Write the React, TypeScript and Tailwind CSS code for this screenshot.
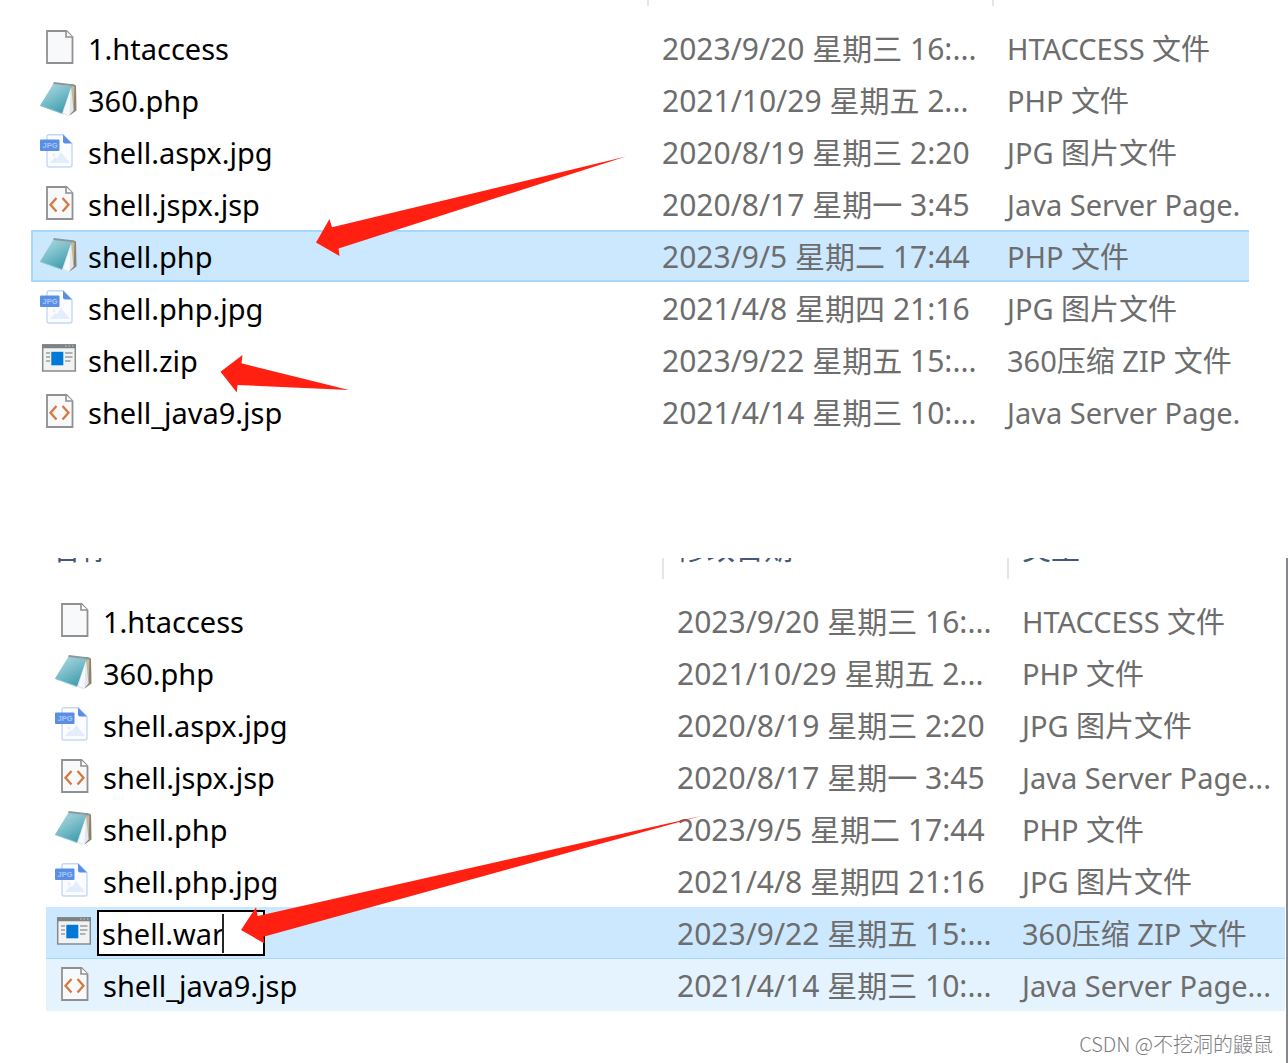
import { useState } from 'react'

type IconKind = 'blank' | 'notepad' | 'image' | 'code' | 'archive'
type RowState = 'normal' | 'selected' | 'renaming' | 'hover'

interface FileEntry {
  name: string
  icon: IconKind
  modified: string
  type: string
  state?: RowState
}

const UPLOAD_FILES: FileEntry[] = [
  { name: '1.htaccess', icon: 'blank', modified: '2023/9/20 星期三 16:...', type: 'HTACCESS 文件' },
  { name: '360.php', icon: 'notepad', modified: '2021/10/29 星期五 2...', type: 'PHP 文件' },
  { name: 'shell.aspx.jpg', icon: 'image', modified: '2020/8/19 星期三 2:20', type: 'JPG 图片文件' },
  { name: 'shell.jspx.jsp', icon: 'code', modified: '2020/8/17 星期一 3:45', type: 'Java Server Page.' },
  { name: 'shell.php', icon: 'notepad', modified: '2023/9/5 星期二 17:44', type: 'PHP 文件', state: 'selected' },
  { name: 'shell.php.jpg', icon: 'image', modified: '2021/4/8 星期四 21:16', type: 'JPG 图片文件' },
  { name: 'shell.zip', icon: 'archive', modified: '2023/9/22 星期五 15:...', type: '360压缩 ZIP 文件' },
  { name: 'shell_java9.jsp', icon: 'code', modified: '2021/4/14 星期三 10:...', type: 'Java Server Page.' },
]

const RENAME_FILES: FileEntry[] = [
  { name: '1.htaccess', icon: 'blank', modified: '2023/9/20 星期三 16:...', type: 'HTACCESS 文件' },
  { name: '360.php', icon: 'notepad', modified: '2021/10/29 星期五 2...', type: 'PHP 文件' },
  { name: 'shell.aspx.jpg', icon: 'image', modified: '2020/8/19 星期三 2:20', type: 'JPG 图片文件' },
  { name: 'shell.jspx.jsp', icon: 'code', modified: '2020/8/17 星期一 3:45', type: 'Java Server Page...' },
  { name: 'shell.php', icon: 'notepad', modified: '2023/9/5 星期二 17:44', type: 'PHP 文件' },
  { name: 'shell.php.jpg', icon: 'image', modified: '2021/4/8 星期四 21:16', type: 'JPG 图片文件' },
  { name: 'shell.war', icon: 'archive', modified: '2023/9/22 星期五 15:...', type: '360压缩 ZIP 文件', state: 'renaming' },
  { name: 'shell_java9.jsp', icon: 'code', modified: '2021/4/14 星期三 10:...', type: 'Java Server Page...', state: 'hover' },
]

const ROW_STYLES: Record<RowState, string> = {
  normal: '',
  selected: 'bg-[#cce8ff] shadow-[inset_2px_0_0_#a6d8ff,inset_0_2px_0_#a6d8ff,inset_0_-2px_0_#a6d8ff]',
  renaming: 'bg-[#cce8ff] shadow-[inset_0_-1px_0_#a9d7fd]',
  hover: 'bg-[#e5f3ff]',
}

function PageShape() {
  return (
    <>
      <path d="M7 1h19.5l6 6v26H7z" fill="#f8f9fa" stroke="#909090" strokeWidth={1.8} />
      <path d="M26 1v6h6.5" fill="#fff" stroke="#909090" strokeWidth={1.6} />
    </>
  )
}

function FileIcon({ kind }: { kind: IconKind }) {
  return (
    <svg className="h-9 w-9 shrink-0 overflow-visible" viewBox="0 0 36 36" fill="none" aria-hidden="true">
      {kind === 'blank' && <PageShape />}

      {kind === 'code' && (
        <>
          <PageShape />
          <path d="M16.5 12l-6 6.7 6 6.7M22.5 12l6 6.7-6 6.7" stroke="#d9773f" strokeWidth={2.3} />
        </>
      )}

      {kind === 'notepad' && (
        <>
          <defs>
            <linearGradient id="cover" x1="0" y1="0" x2="0.6" y2="1">
              <stop offset="0" stopColor="#b5dde3" />
              <stop offset="0.5" stopColor="#7fc0cc" />
              <stop offset="1" stopColor="#439eaf" />
            </linearGradient>
          </defs>
          <path d="M31 2l5 1.5.5 25-7 5z" fill="#8b8170" />
          <path d="M31.5 3l3 1.5-1 24-5 5z" fill="#c5b999" />
          <path d="M31 4l2.5 24.5-5 5.5-10-3z" fill="#dfe8ef" />
          <path d="M30.5 7l-1 26-6-2z" fill="#f6fafc" />
          <path d="M13.5 1.5l18 2.5-9.5 27.5L0 23.5z" fill="url(#cover)" />
          <path d="M13.5 1l21 2.5" stroke="#8b9899" strokeWidth={1.8} />
          <path d="M0 23.5l22 8" stroke="#82c6cf" strokeWidth={1} />
        </>
      )}

      {kind === 'image' && (
        <>
          <path d="M9 .7h14l9 9V31a2 2 0 01-2 2H9a2 2 0 01-2-2V2.7a2 2 0 012-2z" fill="#fbfcff" stroke="#c5d7f8" strokeWidth={1.4} />
          <path d="M23 .5v7a2 2 0 002 2h7z" fill="#5b8fe6" />
          <path d="M10 29l5-6 2 1 4-6 9 11z" fill="#e4edfc" />
          <circle cx="14" cy="21" r="1.5" fill="#e4edfc" />
          <rect x="0" y="5.5" width="19.5" height="11.5" rx="1" fill="#5b8fe6" />
          <text x="2.5" y="14" fontSize="7.5" fontWeight="700" fill="#a9c6f6" fontFamily="Liberation Sans, sans-serif">
            JPG
          </text>
        </>
      )}

      {kind === 'archive' && (
        <>
          <rect x="2.7" y="3" width="32.6" height="26" fill="#f1f2f2" stroke="#858a8d" strokeWidth={1.5} />
          <path d="M2 2.3h34v4H2z" fill="#7d8285" />
          <path d="M25 4h1.5M28.5 4H30M32 4h1.5" stroke="#c9cccd" strokeWidth={1.2} />
          <rect x="11.3" y="9.8" width="12" height="13.5" fill="#0078d7" />
          <path d="M6 11h4M6 15h4M6 19h4M25 11h7.5M25 15h7.5M25 19h5.5" stroke="#9a9d9f" strokeWidth={1.5} />
        </>
      )}
    </svg>
  )
}

function RenameBox({ initial }: { initial: string }) {
  const [value, setValue] = useState(initial)

  return (
    <span className="relative -ml-1.5">
      <input
        type="text"
        aria-label="文件名"
        value={value}
        onChange={(e) => setValue(e.target.value)}
        className="block h-[46px] w-[168px] border-2 border-black bg-white pl-[3px] text-black outline-none"
      />
      <span className="absolute top-1 left-[125px] h-[39px] w-0.5 bg-neutral-800" />
    </span>
  )
}

function FileRow({ file }: { file: FileEntry }) {
  const state = file.state ?? 'normal'

  return (
    <tr className={`h-13 ${ROW_STYLES[state]}`}>
      <td className="p-0 pl-[9px]">
        <div className="flex items-center gap-3 text-black">
          <FileIcon kind={file.icon} />
          {state === 'renaming' ? <RenameBox initial={file.name} /> : <span className="pt-0.5">{file.name}</span>}
        </div>
      </td>
      <td className="p-0 pt-0.5 pl-[15px] text-[30px]">{file.modified}</td>
      <td className="p-0 pt-0.5 pl-[15px]">{file.type}</td>
    </tr>
  )
}

interface FileTableProps {
  files: FileEntry[]
  header: React.ReactNode
}

function FileTable({ files, header }: FileTableProps) {
  return (
    <table className="w-full table-fixed border-collapse text-left whitespace-nowrap text-[#6d6d6d]">
      <colgroup>
        <col className="w-[616px]" />
        <col className="w-[345px]" />
        <col />
      </colgroup>
      <thead>{header}</thead>
      <tbody>
        {files.map((file) => (
          <FileRow key={file.name} file={file} />
        ))}
      </tbody>
    </table>
  )
}

function Arrow({ points }: { points: string }) {
  return <polygon points={points} fill="#ff2011" />
}

const HEADERS = ['名称', '修改日期', '类型']

export default function App() {
  return (
    <main className="bg-white font-['Noto_Sans','Noto_Sans_CJK_SC',sans-serif] text-[29px] leading-10">
      <section className="relative pr-[39px] pb-[120px] pl-[31px]">
        <FileTable
          files={UPLOAD_FILES}
          header={
            <tr className="h-[22px] align-top">
              <td className="p-0" />
              <td className="p-0">
                <div className="h-1.5 border-l-2 border-neutral-200" />
              </td>
              <td className="p-0">
                <div className="h-1.5 border-l-2 border-neutral-200" />
              </td>
            </tr>
          }
        />
        <svg className="pointer-events-none absolute top-0 left-0 h-[440px] w-[700px]" viewBox="0 0 700 440">
          <Arrow points="316,242.5 329.5,219 332,227.3 626,156.5 338.5,248.5 339.5,256" />
          <Arrow points="220.5,371.7 242.5,355 241.5,363.3 349,390 237.5,385 236.8,392.5" />
        </svg>
      </section>

      <section className="relative border-r-2 border-[#85878a] pr-px pl-[46px]">
        {/* the header is scrolled almost out of view, only its lower edge shows */}
        <FileTable
          files={RENAME_FILES}
          header={
            <tr className="h-[37px] align-top">
              {HEADERS.map((label, i) => (
                <th key={label} className="p-0 font-normal text-[#44597a]">
                  <div
                    className={`flex h-[21px] items-start overflow-hidden ${
                      i === 0 ? 'pl-[5px]' : 'border-l-2 border-neutral-200 pl-[13px]'
                    }`}
                  >
                    <span className="flex h-[5px] items-end overflow-hidden">
                      <span className="h-[34px]">{label}</span>
                    </span>
                  </div>
                </th>
              ))}
            </tr>
          }
        />
        <svg className="pointer-events-none absolute top-0 left-0 h-[440px] w-[720px]" viewBox="0 0 720 440">
          <Arrow points="241,372 256,349.3 257.7,358 701,258 263.5,378.7 264.5,385.5" />
        </svg>
        <footer className="flex h-13 items-center justify-end pt-3.5 pr-3 font-['Noto_Sans_CJK_SC',sans-serif] text-xl font-light text-[#7d7d7d]">
          CSDN @不挖洞的鼹鼠
        </footer>
      </section>
    </main>
  )
}
